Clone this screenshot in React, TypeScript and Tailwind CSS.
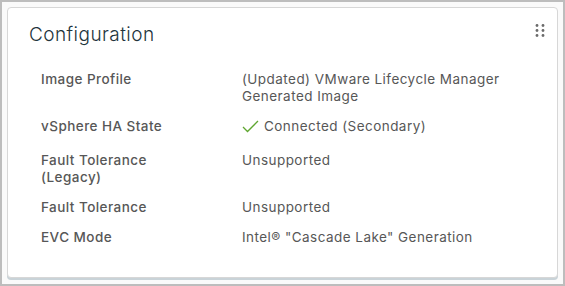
import React from 'react';

const font = { fontFamily: '"Inter", "Liberation Sans", sans-serif' };

function CheckIcon() {
    return (
        <svg width="17" height="14" viewBox="0 0 17 14" className="shrink-0 mt-[2px]">
            <path d="M1 7 L5.5 11.5 L16 1" fill="none" stroke="#5fa630" strokeWidth="1.3" />
        </svg>
    );
}

function DragHandle() {
    return (
        <svg width="10" height="15" viewBox="0 0 10 15" className="text-[#6b6b6b]">
            {[1.5, 6.5, 11.5].map(y => (
                <g key={y}>
                    <circle cx="2" cy={y + 1} r="1.4" fill="currentColor" />
                    <circle cx="8" cy={y + 1} r="1.4" fill="currentColor" />
                </g>
            ))}
        </svg>
    );
}

const rows: { label: string; value: React.ReactNode; tall?: boolean }[] = [
    { label: 'Image Profile', value: '(Updated) VMware Lifecycle Manager Generated Image' },
    {
        label: 'vSphere HA State',
        tall: true,
        value: (
            <span className="flex items-start gap-[5px]">
                <CheckIcon />
                Connected (Secondary)
            </span>
        ),
    },
    { label: 'Fault Tolerance (Legacy)', value: 'Unsupported' },
    { label: 'Fault Tolerance', value: 'Unsupported' },
    { label: 'EVC Mode', value: 'Intel® "Cascade Lake" Generation' },
];

export default function App() {
    return (
        <div className="w-[565px] h-[286px] border-2 border-[#bdbdbd] bg-[#fafafa] p-[5px]" style={font}>
            <div className="h-[271px] rounded-[4px] border border-[#d7d7d7] bg-white shadow-[0_2px_0_0_#c9d3d8]">
                {/* Header */}
                <div className="flex items-start justify-between pl-[21px] pr-[12px] pt-[14px]">
                    <h2 className="text-[19px] leading-[26px] font-light tracking-[0.45px] text-[#22343c]">Configuration</h2>
                    <div className="pt-[1px]">
                        <DragHandle />
                    </div>
                </div>

                {/* Properties */}
                <div className="mt-[23px] pl-[33px] pr-[20px] flex flex-col gap-[13px]">
                    {rows.map(row => (
                        <div
                            key={row.label}
                            className={`grid grid-cols-[201px_1fr] text-[13.5px] leading-[17px] tracking-[0.45px] text-[#575757] ${row.tall ? 'h-[21px]' : ''}`}
                        >
                            <div className="font-medium w-[140px]">{row.label}</div>
                            <div className="w-[285px]">{row.value}</div>
                        </div>
                    ))}
                </div>
            </div>
        </div>
    );
}
